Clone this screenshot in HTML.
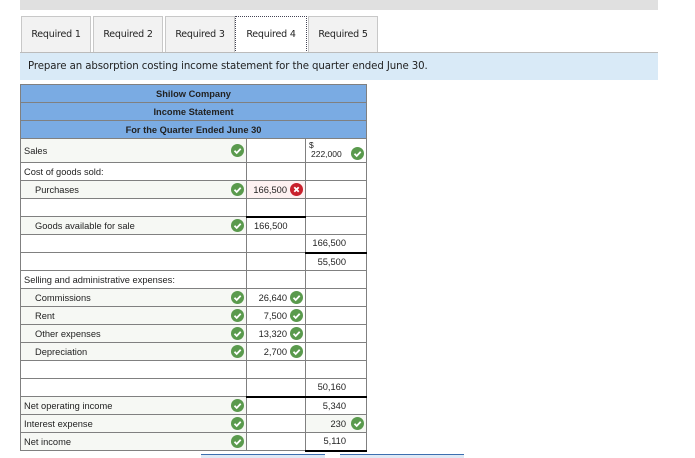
<!DOCTYPE html>
<html><head><meta charset="utf-8"><style>
body{margin:0;width:695px;height:456px;overflow:hidden;background:#fff;font-family:"Liberation Sans",Arial,sans-serif;position:relative}
.bar{position:absolute;left:20px;top:0;width:638px;height:10px;background:#e0e0e0}
.tab{position:absolute;top:16px;height:35px;width:68px;background:#f2f2f2;border:1px solid #c8c8c8;border-bottom:none;font-size:9.5px;color:#222;text-align:center;line-height:35px;font-family:"DejaVu Sans",sans-serif;letter-spacing:-0.2px}
.tab.act{background:#fff;border:1px dotted #445;border-bottom:none;height:36px}
.line{position:absolute;left:20px;top:52px;width:638px;height:1px;background:#bbb}
.inst{position:absolute;left:20px;top:53px;width:638px;height:27px;background:#d9eaf7;font-size:10.2px;line-height:27px;padding-left:8px;box-sizing:border-box;color:#222;font-family:"DejaVu Sans",sans-serif;letter-spacing:-0.1px}
table{position:absolute;left:20px;top:84px;width:346px;border-collapse:collapse;table-layout:fixed;font-size:9.3px;color:#222}
td{border:1px solid #808080;padding:0 3px;height:18px;line-height:16px;white-space:nowrap;position:relative;overflow:visible;box-sizing:border-box}
.h td{background:#7aabe3;text-align:center;font-weight:bold;font-size:9.3px}
.g{background:#f6f8f4}
.in{padding-left:14px}
.n{text-align:right;padding-right:18px}
.n3{text-align:right;padding-right:20px}
.ok{position:absolute;width:13px;height:13px;border-radius:50%;background:#5a9a4d;top:50%;margin-top:-6.5px}
.ok svg,.x svg{position:absolute;left:0;top:0}
.x{position:absolute;width:13px;height:13px;border-radius:50%;background:#c8202c;top:50%;margin-top:-6.5px}
.bt{border-top:2px solid #000}
.btn{position:absolute;top:454px;height:3px;border-top:1px solid #3c6fb0;background:#dfe9f5}
</style></head><body>
<div class="bar"></div>
<div class="tab" style="left:21px">Required 1</div>
<div class="tab" style="left:93px">Required 2</div>
<div class="tab" style="left:165px">Required 3</div>
<div class="tab act" style="left:235px;width:70px">Required 4</div>
<div class="tab" style="left:308px">Required 5</div>
<div class="line"></div>
<div class="inst">Prepare an absorption costing income statement for the quarter ended June 30.</div>
<table>
<colgroup><col style="width:226px"><col style="width:59px"><col style="width:61px"></colgroup>
<tr class="h"><td colspan="3">Shilow Company</td></tr>
<tr class="h"><td colspan="3">Income Statement</td></tr>
<tr class="h"><td colspan="3">For the Quarter Ended June 30</td></tr>
<tr><td class="g" style="height:24px">Sales<span class="ok" style="right:2px"><svg width="13" height="13"><path d="M3.5 6.8l2.2 2.2 4-4.2" stroke="#fff" stroke-width="1.8" fill="none"/></svg></span></td><td></td><td style="vertical-align:top;font-size:8.5px;line-height:9px;padding-top:2px">$<br><span style="padding-left:2px">222,000</span><span class="ok" style="right:2px;margin-top:-4px"><svg width="13" height="13"><path d="M3.5 6.8l2.2 2.2 4-4.2" stroke="#fff" stroke-width="1.8" fill="none"/></svg></span></td></tr>
<tr><td>Cost of goods sold:</td><td></td><td></td></tr>
<tr><td class="g in">Purchases<span class="ok" style="right:2px"><svg width="13" height="13"><path d="M3.5 6.8l2.2 2.2 4-4.2" stroke="#fff" stroke-width="1.8" fill="none"/></svg></span></td><td style="background:#fdf1f1" class="n">166,500<span class="x" style="right:2px"><svg width="13" height="13"><path d="M4.3 4.3l4.4 4.4M8.7 4.3l-4.4 4.4" stroke="#fff" stroke-width="1.8"/></svg></span></td><td></td></tr>
<tr><td></td><td></td><td></td></tr>
<tr><td class="g in">Goods available for sale<span class="ok" style="right:2px"><svg width="13" height="13"><path d="M3.5 6.8l2.2 2.2 4-4.2" stroke="#fff" stroke-width="1.8" fill="none"/></svg></span></td><td class="bt" style="padding-left:7px">166,500</td><td></td></tr>
<tr><td></td><td></td><td class="n3">166,500</td></tr>
<tr><td></td><td></td><td class="n3 bt">55,500</td></tr>
<tr><td>Selling and administrative expenses:</td><td></td><td></td></tr>
<tr><td class="g in">Commissions<span class="ok" style="right:2px"><svg width="13" height="13"><path d="M3.5 6.8l2.2 2.2 4-4.2" stroke="#fff" stroke-width="1.8" fill="none"/></svg></span></td><td class="n">26,640<span class="ok" style="right:2px"><svg width="13" height="13"><path d="M3.5 6.8l2.2 2.2 4-4.2" stroke="#fff" stroke-width="1.8" fill="none"/></svg></span></td><td></td></tr>
<tr><td class="g in">Rent<span class="ok" style="right:2px"><svg width="13" height="13"><path d="M3.5 6.8l2.2 2.2 4-4.2" stroke="#fff" stroke-width="1.8" fill="none"/></svg></span></td><td class="n">7,500<span class="ok" style="right:2px"><svg width="13" height="13"><path d="M3.5 6.8l2.2 2.2 4-4.2" stroke="#fff" stroke-width="1.8" fill="none"/></svg></span></td><td></td></tr>
<tr><td class="g in">Other expenses<span class="ok" style="right:2px"><svg width="13" height="13"><path d="M3.5 6.8l2.2 2.2 4-4.2" stroke="#fff" stroke-width="1.8" fill="none"/></svg></span></td><td class="n">13,320<span class="ok" style="right:2px"><svg width="13" height="13"><path d="M3.5 6.8l2.2 2.2 4-4.2" stroke="#fff" stroke-width="1.8" fill="none"/></svg></span></td><td></td></tr>
<tr><td class="g in">Depreciation<span class="ok" style="right:2px"><svg width="13" height="13"><path d="M3.5 6.8l2.2 2.2 4-4.2" stroke="#fff" stroke-width="1.8" fill="none"/></svg></span></td><td class="n">2,700<span class="ok" style="right:2px"><svg width="13" height="13"><path d="M3.5 6.8l2.2 2.2 4-4.2" stroke="#fff" stroke-width="1.8" fill="none"/></svg></span></td><td></td></tr>
<tr><td></td><td></td><td></td></tr>
<tr><td></td><td></td><td class="n3">50,160</td></tr>
<tr><td class="g">Net operating income<span class="ok" style="right:2px"><svg width="13" height="13"><path d="M3.5 6.8l2.2 2.2 4-4.2" stroke="#fff" stroke-width="1.8" fill="none"/></svg></span></td><td class="bt"></td><td class="n3 bt">5,340</td></tr>
<tr><td class="g" style="height:17px">Interest expense<span class="ok" style="right:2px"><svg width="13" height="13"><path d="M3.5 6.8l2.2 2.2 4-4.2" stroke="#fff" stroke-width="1.8" fill="none"/></svg></span></td><td></td><td class="n3 g">230<span class="ok" style="right:2px"><svg width="13" height="13"><path d="M3.5 6.8l2.2 2.2 4-4.2" stroke="#fff" stroke-width="1.8" fill="none"/></svg></span></td></tr>
<tr><td class="g" style="height:17px">Net income<span class="ok" style="right:2px"><svg width="13" height="13"><path d="M3.5 6.8l2.2 2.2 4-4.2" stroke="#fff" stroke-width="1.8" fill="none"/></svg></span></td><td></td><td class="n3" style="border-bottom:2px solid #000">5,110</td></tr>
</table>
<div class="btn" style="left:201px;width:124px"></div>
<div class="btn" style="left:340px;width:124px"></div>
</body></html>
